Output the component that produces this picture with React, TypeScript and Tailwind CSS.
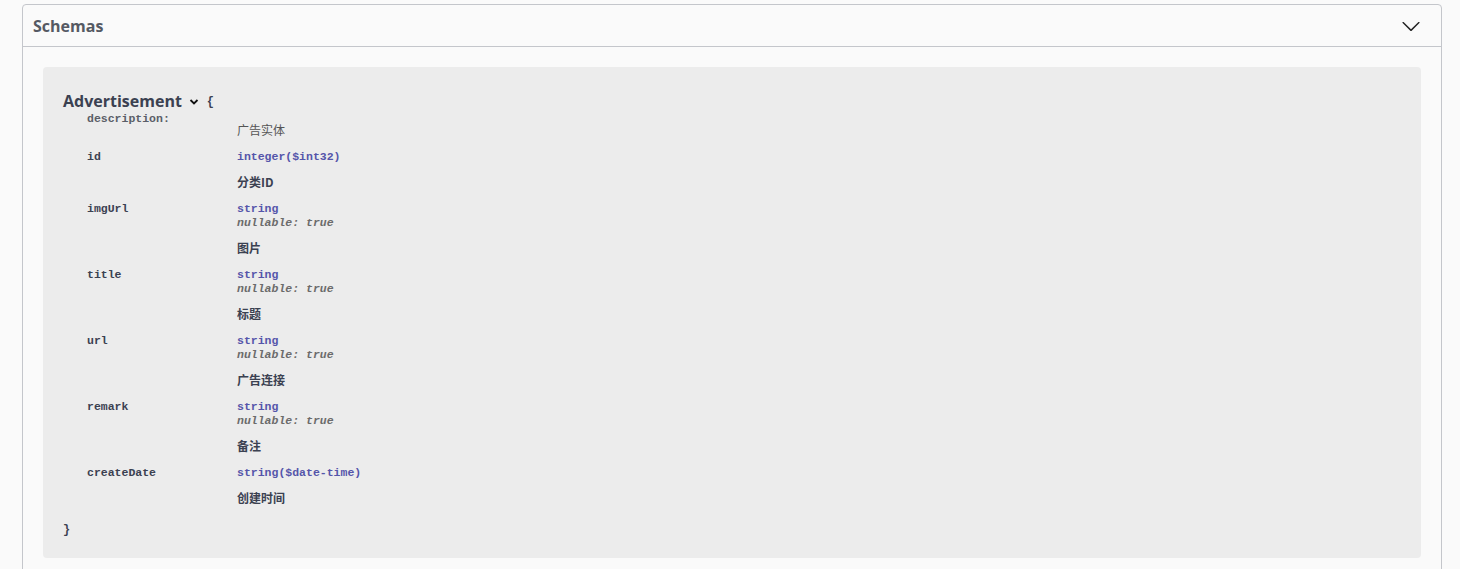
import React from "react";

const mono = { fontFamily: '"Liberation Mono", "DejaVu Sans Mono", monospace' };
const cjk = { fontFamily: '"Noto Sans CJK SC", "Noto Sans", sans-serif' };

type Prop = { name: string; type: string; nullable?: boolean; desc: string };

const props: Prop[] = [
  { name: "id", type: "integer($int32)", desc: "分类ID" },
  { name: "imgUrl", type: "string", nullable: true, desc: "图片" },
  { name: "title", type: "string", nullable: true, desc: "标题" },
  { name: "url", type: "string", nullable: true, desc: "广告连接" },
  { name: "remark", type: "string", nullable: true, desc: "备注" },
  { name: "createDate", type: "string($date-time)", desc: "创建时间" },
];

export default function App() {
  return (
    <div className="h-[569px] bg-[#fafafa] pt-[4px] px-[22px] overflow-hidden" style={{ fontFamily: '"Open Sans", sans-serif' }}>
      <section className="border border-[#c4c6cb] rounded-t-[4px] bg-[#fafafa] h-[566px] w-[1420px]">
        <div className="h-[42px] border-b border-[#c4c6cb] flex items-center justify-between pl-[10px] pr-[20px]">
          <h4 className="text-[16px] font-bold text-[#555963] leading-none">Schemas</h4>
          <svg width="20" height="20" viewBox="0 0 20 20" className="text-[#222]">
            <path
              fill="currentColor"
              d="M17.418 6.109c.272-.268.709-.268.979 0s.271.701 0 .969l-7.908 7.83c-.27.268-.707.268-.979 0l-7.908-7.83c-.27-.268-.27-.701 0-.969.271-.268.709-.268.979 0L10 13.25l7.418-7.141z"
            />
          </svg>
        </div>
        <div className="px-[20px] pt-[20px]">
          <div className="bg-[#ececec] rounded-[4px] h-[491px] pl-[20px] pt-[24px]">
            <div className="flex items-center h-[20px]">
              <span className="text-[16px] font-bold text-[#3b4151] leading-[20px]">Advertisement</span>
              <svg width="10" height="10" viewBox="0 0 10 10" className="ml-[7px] mt-[2px]">
                <path d="M1.5 3 L5 6.5 L8.5 3" fill="none" stroke="#111" strokeWidth="1.8" />
              </svg>
              <span className="ml-[8px] text-[12px] font-bold text-[#3b4151] leading-[20px] mt-[2px]" style={mono}>{"{"}</span>
            </div>
            <div className="pl-[24px] pt-[1px]">
              <div className="flex">
                <div className="w-[150px] text-[11.5px] font-bold text-[#5a5e68] leading-[14px]" style={mono}>description:</div>
                <div className="pt-[11px] pb-[13px]">
                  <div className="text-[12px] text-[#555] leading-[14px]" style={cjk}>广告实体</div>
                </div>
              </div>
              {props.map((p) => (
                <div key={p.name} className="flex">
                  <div className="w-[150px] text-[11.5px] font-bold text-[#3b4151] leading-[14px]" style={mono}>{p.name}</div>
                  <div className="pb-[13px]">
                    <div className="text-[11.5px] font-bold text-[#5555aa] leading-[14px]" style={mono}>{p.type}</div>
                    {p.nullable && (
                      <div className="text-[11.5px] font-bold italic text-[#6b6b6b] leading-[14px]" style={mono}>nullable: true</div>
                    )}
                    <div className="mt-[11px] text-[12px] font-bold text-[#3b4151] leading-[14px]" style={cjk}>{p.desc}</div>
                  </div>
                </div>
              ))}
            </div>
            <div className="mt-[5px] text-[12px] font-bold text-[#3b4151] leading-[14px]" style={mono}>{"}"}</div>
          </div>
        </div>
      </section>
    </div>
  );
}
